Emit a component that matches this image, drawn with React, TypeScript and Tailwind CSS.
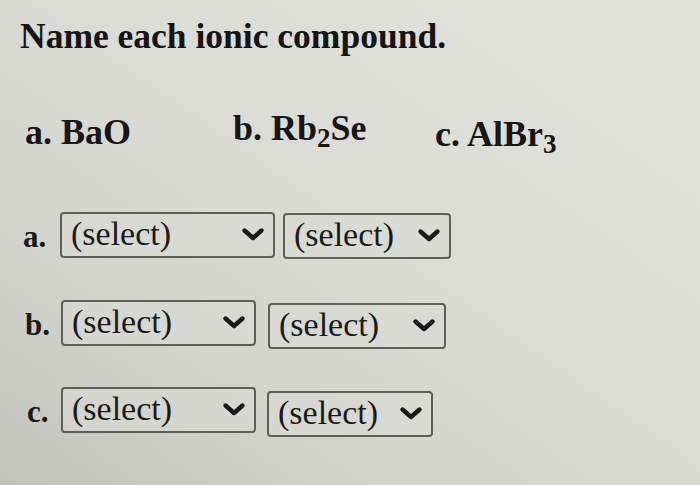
import { type ReactNode } from 'react';

// Worksheet: name the ionic compounds, one pair of dropdowns per compound.

const serif = { fontFamily: '"Liberation Serif", "Times New Roman", serif' };

function Chevron() {
  return (
    <svg width="24" height="15" viewBox="0 0 24 15" className="shrink-0">
      <polyline
        points="3.5,3.5 12,11 20.5,3.5"
        fill="none"
        stroke="#1a1a1a"
        strokeWidth="4.4"
        strokeLinecap="round"
        strokeLinejoin="round"
      />
    </svg>
  );
}

function Dropdown({ width, className = '' }: { width: string; className?: string }) {
  return (
    <div
      className={`${width} ${className} h-[46px] flex items-center justify-between pl-[9px] pr-[8px] border-2 border-[#5e5e5b] rounded-[4px] bg-[#dadbd4]/60`}
    >
      <span className="text-[34px] leading-none text-[#1a1a1a] -mt-[2px]">(select)</span>
      <Chevron />
    </div>
  );
}

function Formula({ label, children, className = '' }: { label: string; children: ReactNode; className?: string }) {
  return (
    <span className={`font-bold text-[36px] leading-none text-[#161616] ${className}`}>
      {label} {children}
    </span>
  );
}

const rows = [
  { label: 'a.', lead: 'ml-0 w-[37px]', first: 'w-[215px]', second: 'w-[168px] mt-[1px]', gap: 'ml-[8px]', h: 'h-[88px]' },
  { label: 'b.', lead: 'ml-[2px] w-[36px]', first: 'w-[195px]', second: 'w-[178px] mt-[3px]', gap: 'ml-[12px]', h: 'h-[87px]' },
  { label: 'c.', lead: 'ml-[4px] w-[34px]', first: 'w-[195px]', second: 'w-[166px] mt-[4px]', gap: 'ml-[11px]', h: 'h-[50px]' },
];

export default function App() {
  return (
    <div
      className="w-[700px] h-[485px] overflow-hidden bg-[linear-gradient(to_top_right,#c3c3be_0%,#d3d4ce_28%,#dbdcd6_55%,#e1e2dc_100%)]"
      style={serif}
    >
      <h1 className="pt-[19px] pl-[20px] text-[35.5px] leading-none font-bold text-[#151515]">
        Name each ionic compound.
      </h1>

      <div className="mt-[59px] flex items-start">
        <Formula label="a." className="pl-[25px] w-[233px]">
          BaO
        </Formula>
        <Formula label="b." className="w-[202px] -mt-[4px]">
          Rb<sub className="text-[27px] relative top-[7px] align-baseline">2</sub>Se
        </Formula>
        <Formula label="c." className="mt-[2px]">
          AlBr<sub className="text-[27px] relative top-[7px] align-baseline">3</sub>
        </Formula>
      </div>

      <div className="mt-[60px] flex flex-col">
        {rows.map((row) => (
          <div key={row.label} className={`flex items-start pl-[23px] ${row.h}`}>
            <span className={`${row.lead} pt-[9px] text-[31px] leading-none font-bold text-[#1a1a1a]`}>
              {row.label}
            </span>
            <Dropdown width={row.first} />
            <Dropdown width={row.second} className={row.gap} />
          </div>
        ))}
      </div>
    </div>
  );
}
